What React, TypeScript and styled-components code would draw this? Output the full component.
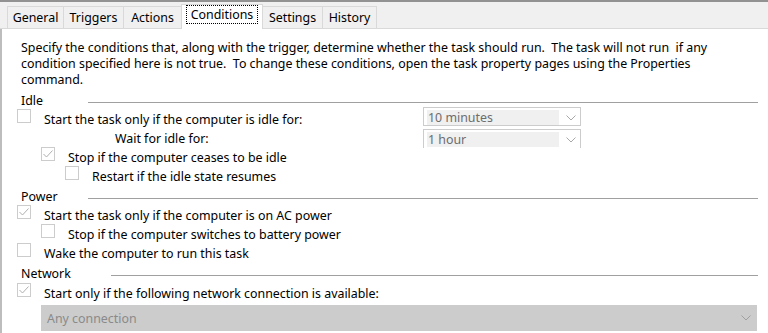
import { FC } from 'react'
import styled, { createGlobalStyle, css } from 'styled-components'

const GlobalStyle = createGlobalStyle`
  html, body {
    margin: 0;
    padding: 0;
    background: #ffffff;
  }
  body {
    font-family: 'Noto Sans', 'Open Sans', sans-serif;
    font-size: 12.4px;
    color: #000000;
  }
  * {
    box-sizing: border-box;
  }
`

const Frame = styled.div`
  width: 768px;
  height: 333px;
  overflow: hidden;
  background: #ffffff;
  border-top: 2px solid #929292;
  display: flex;
  flex-direction: column;
`

const TabStrip = styled.div`
  height: 27px;
  flex-shrink: 0;
  display: flex;
  align-items: flex-end;
  padding-left: 7px;
  background: #f0f0f0;
  border-bottom: 1px solid #d9d9d9;
`

interface TabProps {
  w: number
  selected?: boolean
}

const Tab = styled.div<TabProps>`
  width: ${({ w }) => w}px;
  height: 22px;
  margin-left: -1px;
  display: flex;
  align-items: center;
  justify-content: center;
  background: #f0f0f0;
  border: 1px solid #d9d9d9;
  border-bottom: none;
  white-space: nowrap;
  &:first-child {
    margin-left: 0;
  }
  ${({ selected }) =>
    selected &&
    css`
      position: relative;
      z-index: 1;
      height: 25px;
      margin-bottom: -1px;
      align-items: flex-start;
      padding-top: 0;
      background: #ffffff;
    `}
`

const FocusRect = styled.span`
  border: 1px dotted #000000;
  padding: 0 4px;
  line-height: 17px;
`

const Body = styled.div`
  flex: 1;
  display: flex;
  flex-direction: column;
  border-left: 2px solid #bdbdbd;
`

const Description = styled.p`
  margin: 11px 0 3px 0;
  padding-left: 19px;
  line-height: 16px;
  white-space: nowrap;
`

interface HeadingProps {
  labelWidth: number
  gap?: number
}

const Heading = styled.div<HeadingProps>`
  height: 19px;
  margin-top: ${({ gap }) => gap ?? 0}px;
  display: flex;
  align-items: center;
  padding-left: 19px;
  span {
    width: ${({ labelWidth }) => labelWidth}px;
    flex-shrink: 0;
  }
`

const Rule = styled.div`
  flex: 1;
  height: 1px;
  margin: 3px 10px 0 0;
  background: #a0a0a0;
`

interface RowProps {
  level: number
  gap?: number
}

const CheckRow = styled.div<RowProps>`
  height: 19px;
  margin-top: ${({ gap }) => gap ?? 0}px;
  display: flex;
  align-items: center;
  gap: 13px;
  padding-left: ${({ level }) => 15 + level * 24}px;
  white-space: nowrap;
`

const Box = styled.div`
  width: 14px;
  height: 14px;
  flex-shrink: 0;
  align-self: flex-start;
  margin-top: -1px;
  border: 1px solid #cccccc;
  background: #ffffff;
  display: flex;
  align-items: center;
  justify-content: center;
`

interface FieldRowProps {
  indent: number
}

const FieldRow = styled.div<FieldRowProps>`
  height: 19px;
  display: grid;
  grid-template-columns: ${({ indent }) => 406 - indent}px 158px;
  padding-left: ${({ indent }) => 15 + indent}px;
  align-items: center;
  white-space: nowrap;
`

const LabelCell = styled.div`
  display: flex;
  align-items: center;
  gap: 13px;
  height: 19px;
`

interface ComboProps {
  clipped?: boolean
}

const Combo = styled.div<ComboProps>`
  align-self: start;
  width: 158px;
  height: 19px;
  margin-top: -3px;
  display: flex;
  align-items: flex-start;
  justify-content: space-between;
  padding: 2px 4px 0 3px;
  border: 1px solid #cccccc;
  background: #ffffff;
  ${({ clipped }) =>
    clipped &&
    css`
      height: 19px;
      margin-top: 0;
      padding-top: 2px;
      border-bottom: none;
    `}
`

const ComboValue = styled.div`
  width: 132px;
  height: 15px;
  background: #f0f0f0;
  color: #6d6d6d;
  line-height: 15px;
  padding-left: 1px;
`

const ChevronSlot = styled.div`
  padding-top: 5px;
  display: flex;
`

const ConnectionSelect = styled.div`
  height: 26px;
  margin: 2px 11px 0 39px;
  padding: 0 6px 0 6px;
  display: flex;
  align-items: center;
  justify-content: space-between;
  background: #cccccc;
  color: #8a8a8a;
`

const Chevron: FC<{ color?: string }> = ({ color = '#a8a8a8' }) => (
  <svg width="10" height="6" viewBox="0 0 10 6">
    <polyline points="0.5,0.5 5,5 9.5,0.5" fill="none" stroke={color} strokeWidth="1" />
  </svg>
)

const Check: FC<{ checked?: boolean }> = ({ checked }) => (
  <Box>
    {checked && (
      <svg width="12" height="12" viewBox="0 0 12 12">
        <polyline points="1.5,6 4.5,9 10.5,2.5" fill="none" stroke="#b0b0b0" strokeWidth="1" />
      </svg>
    )}
  </Box>
)

const tabs = [
  { label: 'General', w: 57 },
  { label: 'Triggers', w: 61 },
  { label: 'Actions', w: 59 },
  { label: 'Conditions', w: 82, selected: true },
  { label: 'Settings', w: 61 },
  { label: 'History', w: 55 },
]

const App: FC = () => {
  return (
    <>
      <GlobalStyle />
      <Frame>
        <TabStrip>
          {tabs.map(({ label, w, selected }) => (
            <Tab key={label} w={w} selected={selected}>
              {selected ? <FocusRect>{label}</FocusRect> : label}
            </Tab>
          ))}
        </TabStrip>
        <Body>
          <Description>
            Specify the conditions that, along with the trigger, determine whether the task should run.&nbsp; The task will not run&nbsp; if any
            <br />
            condition specified here is not true.&nbsp; To change these conditions, open the task property pages using the Properties
            <br />
            command.
          </Description>

          <Heading labelWidth={67}>
            <span>Idle</span>
            <Rule />
          </Heading>
          <FieldRow indent={0}>
            <LabelCell>
              <Check />
              <span>Start the task only if the computer is idle for:</span>
            </LabelCell>
            <Combo>
              <ComboValue>10 minutes</ComboValue>
              <ChevronSlot>
                <Chevron />
              </ChevronSlot>
            </Combo>
          </FieldRow>
          <FieldRow indent={98}>
            <LabelCell>
              <span>Wait for idle for:</span>
            </LabelCell>
            <Combo clipped>
              <ComboValue>1 hour</ComboValue>
              <ChevronSlot>
                <Chevron />
              </ChevronSlot>
            </Combo>
          </FieldRow>
          <CheckRow level={1}>
            <Check checked />
            <span>Stop if the computer ceases to be idle</span>
          </CheckRow>
          <CheckRow level={2}>
            <Check />
            <span>Restart if the idle state resumes</span>
          </CheckRow>

          <Heading labelWidth={67} gap={1}>
            <span>Power</span>
            <Rule />
          </Heading>
          <CheckRow level={0}>
            <Check checked />
            <span>Start the task only if the computer is on AC power</span>
          </CheckRow>
          <CheckRow level={1}>
            <Check />
            <span>Stop if the computer switches to battery power</span>
          </CheckRow>
          <CheckRow level={0}>
            <Check />
            <span>Wake the computer to run this task</span>
          </CheckRow>

          <Heading labelWidth={90} gap={1}>
            <span>Network</span>
            <Rule />
          </Heading>
          <CheckRow level={0} gap={1}>
            <Check checked />
            <span>Start only if the following network connection is available:</span>
          </CheckRow>
          <ConnectionSelect>
            <span>Any connection</span>
            <Chevron color="#a0a0a0" />
          </ConnectionSelect>
        </Body>
      </Frame>
    </>
  )
}

export default App
